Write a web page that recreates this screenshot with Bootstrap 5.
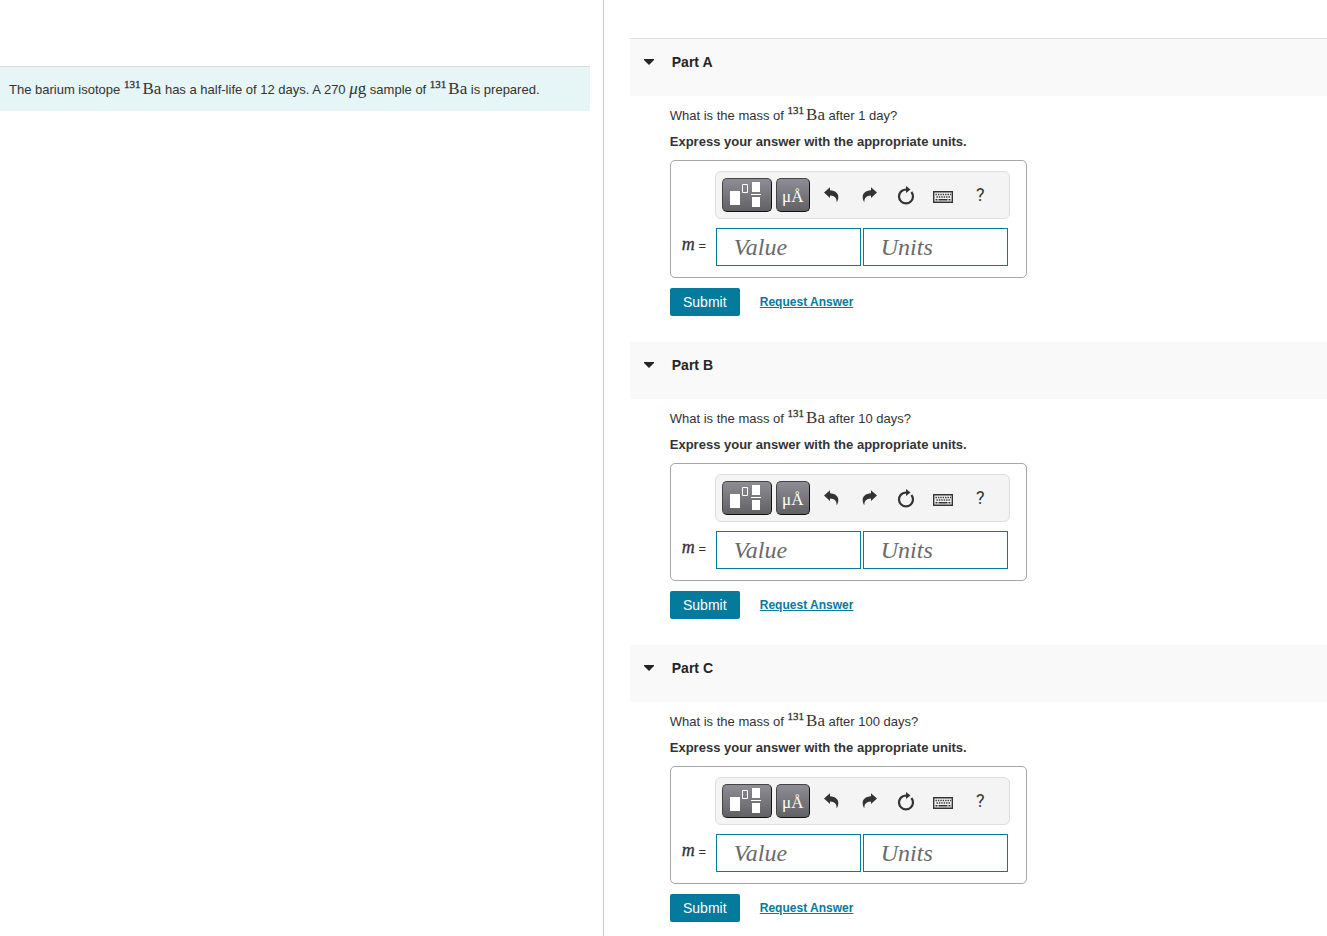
<!DOCTYPE html>
<html lang="en">
<head>
<meta charset="utf-8">
<meta name="viewport" content="width=device-width, initial-scale=1">
<title>Barium-131 half-life</title>
<link href="https://cdn.jsdelivr.net/npm/bootstrap@5.3.0/dist/css/bootstrap.min.css" rel="stylesheet">
<style>
  :root { --accent: #047a9c; --ink: #252525; }
  body { font-family: "Liberation Sans", Arial, sans-serif; font-size: 13px; line-height: 20px; color: #333; background: #fff; }
  .problem-pane { flex: 0 0 45.5%; padding: 66px 13px 0 0; border-right: 1px solid #c3c8d2; }
  .intro { background: #e6f5f6; border-top: 1px solid #dadddd; padding: 13px 9px 11px; white-space: nowrap; }
  .answer-pane { padding: 38px 0 14px 26px; min-width: 0; }
  .part-list { border-top: 1px solid #ddd; }
  .part-head { background: #f9f9f9; height: 57px; padding: 13px 14px; color: var(--ink); }
  .part-head h2 { font-size: 14px; line-height: 20px; font-weight: bold; }
  .part-toggle { width: 10px; height: 20px; margin-right: 18px; }
  .part-body { padding: 10px 0 26px 40px; }
  .instruct { margin: 6px 0 8px; font-weight: bold; }
  .chem { font-family: "Liberation Serif", "Times New Roman", serif; font-size: 17px; line-height: 1; }
  .chem sup { font-size: 11px; line-height: 1; top: -6px; vertical-align: baseline; margin-right: 2px; -webkit-text-stroke: 0.3px; }
  .answer-box { width: 357px; border: 1px solid #a7a7a7; border-radius: 5px; padding: 10px 16px 11px 11px; }
  .math-tools { margin-left: 33px; padding: 6px; border: 1px solid #dedede; border-radius: 6px; background: #f4f4f4; }
  .tool-dark { height: 34px; border: 1px solid #111; border-top-color: #444; border-left-color: #444; border-radius: 5px; background: linear-gradient(#8e8d96, #616164); color: #fff; padding: 0; }
  .tool-wide { width: 50px; }
  .tool-unit { width: 34px; margin: 0 3px 0 4px; padding-top: 4px; font-family: "Liberation Serif", serif; font-size: 17px; line-height: 28px; }
  .tool-plain { width: 37px; height: 34px; border: 0; padding: 0; background: none; color: #333; }
  .tool-help { padding-left: 2px; font-family: Roboto, sans-serif; font-size: 18px; line-height: 34px; }
  .entry-row { margin-top: 9px; gap: 2px; }
  .var-label { width: 32px; padding-bottom: 3px; white-space: nowrap; }
  .var-label i { font-family: "Liberation Serif", serif; font-size: 18px; line-height: 1; -webkit-text-stroke: 0.3px; }
  .entry { width: 145px; height: 38px; padding: 0 17px; border: 1px solid var(--accent); border-radius: 0; font-family: "Liberation Serif", "Times New Roman", serif; font-size: 24px; font-style: italic; color: #333; }
  .entry::placeholder { color: #6a6a6a; opacity: 1; }
  .actions { margin-top: 10px; gap: 20px; }
  .btn-submit { width: 70px; height: 28px; padding: 0; border: 0; border-radius: 2px; background: var(--accent); color: #fff; font-size: 14px; line-height: 28px; }
  .request { color: var(--accent); font-size: 12px; font-weight: bold; }
</style>
</head>
<body>
<svg width="0" height="0" class="d-none" aria-hidden="true">
  <symbol id="i-caret" viewBox="0 0 10 20"><path d="M0 7h10v1L5 13 0 8z" fill="#252525"/></symbol>
  <symbol id="i-template" viewBox="0 0 50 34">
    <path fill="#fff" d="M8 13h10v14H8zM30 4h8v10h-8zM29 16h10v1H29zM30 19h8v10h-8z"/>
    <path fill="none" stroke="#fff" d="M20.500 6.500h5v8h-5z"/>
  </symbol>
  <symbol id="i-undo" viewBox="0 0 37 34"><path fill="currentColor" d="M11 14.500l6-5.200v3c5.500.3 8.500 3.200 8.300 7-.1 2-.6 3.700-1.700 5 .2-4.200-1.600-6.600-6.600-6.800v2.500z"/></symbol>
  <symbol id="i-redo" viewBox="0 0 37 34"><path fill="currentColor" d="M27 14.500l-6-5.200v3c-5.500.3-8.500 3.200-8.300 7 .1 2 .6 3.700 1.700 5-.2-4.200 1.600-6.600 6.600-6.800v2.500z"/></symbol>
  <symbol id="i-reset" viewBox="0 0 37 34">
    <path fill="none" stroke="currentColor" stroke-width="2.200" d="M24.400 14a7 7 0 1 1-10.800 0c1.400-1.600 3-2.500 6-2.500"/>
    <path fill="currentColor" d="M19 8l4.500 3.500-4.500 3.500z"/>
  </symbol>
  <symbol id="i-keys" viewBox="0 0 37 34">
    <path fill="none" stroke="currentColor" stroke-width="1.400" d="M9.700 13.700h18.600v10.600H9.700z"/>
    <path fill="none" stroke="currentColor" stroke-width="1.500" stroke-dasharray="1.400 1" d="M11.500 16.500h15.500M12.500 19h14"/>
    <path fill="none" stroke="currentColor" stroke-width="1.500" d="M11.500 21.700h2M14.500 21.700h9M24.500 21.700h2"/>
  </symbol>
</svg>

<div class="d-flex min-vh-100">
  <aside class="problem-pane">
    <div class="intro">The barium isotope <span class="chem"><sup>131</sup>Ba</span> has a half-life of 12 days. A 270 <span class="chem"><i>μ</i>g</span> sample of <span class="chem"><sup>131</sup>Ba</span> is prepared.</div>
  </aside>

  <main class="answer-pane flex-grow-1">
    <div class="part-list">

      <section>
        <header class="part-head d-flex align-items-start">
          <svg class="part-toggle" aria-hidden="true"><use href="#i-caret"/></svg>
          <h2 class="m-0">Part A</h2>
        </header>
        <form class="part-body">
          <p class="m-0">What is the mass of <span class="chem"><sup>131</sup>Ba</span> after 1 day?</p>
          <p class="instruct">Express your answer with the appropriate units.</p>
          <div class="answer-box">
            <div class="math-tools d-flex">
              <button type="button" class="tool-dark tool-wide d-flex align-items-center justify-content-center" aria-label="Templates"><svg class="flex-shrink-0" width="50" height="34"><use href="#i-template"/></svg></button>
              <button type="button" class="tool-dark tool-unit">μÅ</button>
              <button type="button" class="tool-plain" aria-label="Undo"><svg class="d-block" width="37" height="34"><use href="#i-undo"/></svg></button>
              <button type="button" class="tool-plain" aria-label="Redo"><svg class="d-block" width="37" height="34"><use href="#i-redo"/></svg></button>
              <button type="button" class="tool-plain" aria-label="Reset"><svg class="d-block" width="37" height="34"><use href="#i-reset"/></svg></button>
              <button type="button" class="tool-plain" aria-label="Keyboard shortcuts"><svg class="d-block" width="37" height="34"><use href="#i-keys"/></svg></button>
              <button type="button" class="tool-plain tool-help">?</button>
            </div>
            <div class="entry-row d-flex align-items-center">
              <label class="var-label" for="value-a"><i>m</i> =</label>
              <input class="entry" id="value-a" type="text" placeholder="Value">
              <input class="entry" type="text" placeholder="Units" aria-label="Units">
            </div>
          </div>
          <div class="actions d-flex align-items-center">
            <button type="submit" class="btn btn-submit">Submit</button>
            <a class="request" href="#">Request Answer</a>
          </div>
        </form>
      </section>

      <section>
        <header class="part-head d-flex align-items-start">
          <svg class="part-toggle" aria-hidden="true"><use href="#i-caret"/></svg>
          <h2 class="m-0">Part B</h2>
        </header>
        <form class="part-body">
          <p class="m-0">What is the mass of <span class="chem"><sup>131</sup>Ba</span> after 10 days?</p>
          <p class="instruct">Express your answer with the appropriate units.</p>
          <div class="answer-box">
            <div class="math-tools d-flex">
              <button type="button" class="tool-dark tool-wide d-flex align-items-center justify-content-center" aria-label="Templates"><svg class="flex-shrink-0" width="50" height="34"><use href="#i-template"/></svg></button>
              <button type="button" class="tool-dark tool-unit">μÅ</button>
              <button type="button" class="tool-plain" aria-label="Undo"><svg class="d-block" width="37" height="34"><use href="#i-undo"/></svg></button>
              <button type="button" class="tool-plain" aria-label="Redo"><svg class="d-block" width="37" height="34"><use href="#i-redo"/></svg></button>
              <button type="button" class="tool-plain" aria-label="Reset"><svg class="d-block" width="37" height="34"><use href="#i-reset"/></svg></button>
              <button type="button" class="tool-plain" aria-label="Keyboard shortcuts"><svg class="d-block" width="37" height="34"><use href="#i-keys"/></svg></button>
              <button type="button" class="tool-plain tool-help">?</button>
            </div>
            <div class="entry-row d-flex align-items-center">
              <label class="var-label" for="value-b"><i>m</i> =</label>
              <input class="entry" id="value-b" type="text" placeholder="Value">
              <input class="entry" type="text" placeholder="Units" aria-label="Units">
            </div>
          </div>
          <div class="actions d-flex align-items-center">
            <button type="submit" class="btn btn-submit">Submit</button>
            <a class="request" href="#">Request Answer</a>
          </div>
        </form>
      </section>

      <section>
        <header class="part-head d-flex align-items-start">
          <svg class="part-toggle" aria-hidden="true"><use href="#i-caret"/></svg>
          <h2 class="m-0">Part C</h2>
        </header>
        <form class="part-body pb-0">
          <p class="m-0">What is the mass of <span class="chem"><sup>131</sup>Ba</span> after 100 days?</p>
          <p class="instruct">Express your answer with the appropriate units.</p>
          <div class="answer-box">
            <div class="math-tools d-flex">
              <button type="button" class="tool-dark tool-wide d-flex align-items-center justify-content-center" aria-label="Templates"><svg class="flex-shrink-0" width="50" height="34"><use href="#i-template"/></svg></button>
              <button type="button" class="tool-dark tool-unit">μÅ</button>
              <button type="button" class="tool-plain" aria-label="Undo"><svg class="d-block" width="37" height="34"><use href="#i-undo"/></svg></button>
              <button type="button" class="tool-plain" aria-label="Redo"><svg class="d-block" width="37" height="34"><use href="#i-redo"/></svg></button>
              <button type="button" class="tool-plain" aria-label="Reset"><svg class="d-block" width="37" height="34"><use href="#i-reset"/></svg></button>
              <button type="button" class="tool-plain" aria-label="Keyboard shortcuts"><svg class="d-block" width="37" height="34"><use href="#i-keys"/></svg></button>
              <button type="button" class="tool-plain tool-help">?</button>
            </div>
            <div class="entry-row d-flex align-items-center">
              <label class="var-label" for="value-c"><i>m</i> =</label>
              <input class="entry" id="value-c" type="text" placeholder="Value">
              <input class="entry" type="text" placeholder="Units" aria-label="Units">
            </div>
          </div>
          <div class="actions d-flex align-items-center">
            <button type="submit" class="btn btn-submit">Submit</button>
            <a class="request" href="#">Request Answer</a>
          </div>
        </form>
      </section>

    </div>
  </main>
</div>
<script src="https://cdn.jsdelivr.net/npm/bootstrap@5.3.0/dist/js/bootstrap.bundle.min.js"></script>
</body>
</html>
